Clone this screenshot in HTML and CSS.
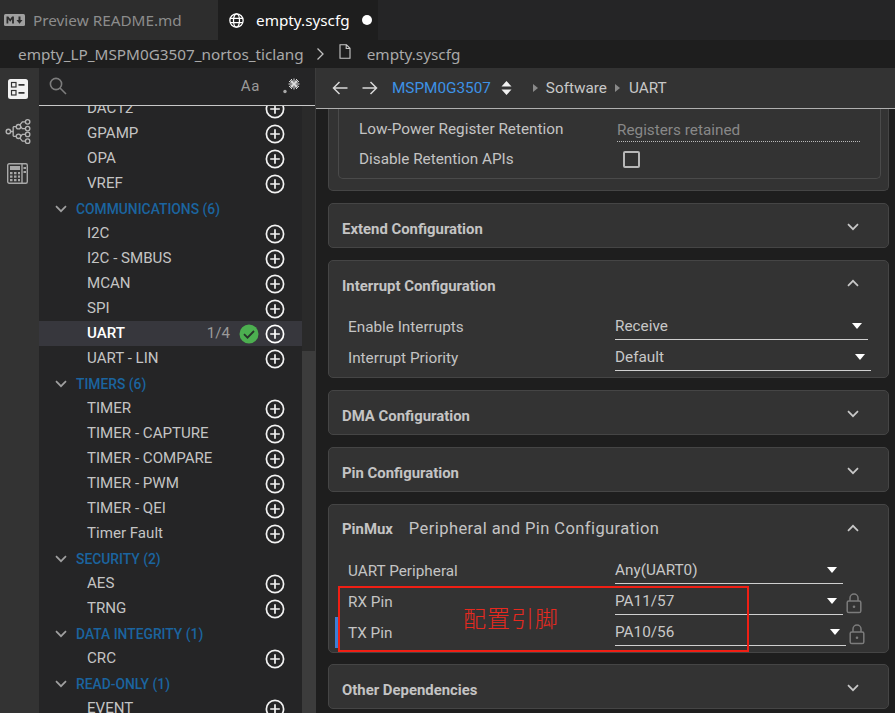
FILE: index.html
```html
<!DOCTYPE html>
<html lang="en">
<head>
<meta charset="utf-8">
<title>empty.syscfg</title>
<link rel="stylesheet" href="styles.css">
</head>
<body>
<svg class="defs" width="0" height="0">
  <symbol id="plus" viewBox="0 0 20 20"><circle cx="10" cy="10" r="8.6" fill="none" stroke="currentColor" stroke-width="1.7"/><path d="M10 5.2v9.6M5.2 10h9.6" stroke="currentColor" stroke-width="1.7" fill="none"/></symbol>
  <symbol id="chev" viewBox="0 0 12 8"><path d="M1 1.2l5 5 5-5" fill="none" stroke="currentColor" stroke-width="1.7"/></symbol>
  <symbol id="up" viewBox="0 0 12 8"><path d="M1 6.8l5-5 5 5" fill="none" stroke="currentColor" stroke-width="1.7"/></symbol>
  <symbol id="lock" viewBox="0 0 16 22"><path d="M4 9V6a4 4 0 0 1 8 0v3" fill="none" stroke="currentColor" stroke-width="1.5"/><rect x="1.2" y="9" width="13.6" height="11.6" rx="1.6" fill="none" stroke="currentColor" stroke-width="1.5"/><circle cx="8" cy="14.8" r="1.3" fill="currentColor"/></symbol>
</svg>
<header class="tabs">
  <div class="tab">
    <svg class="md-icon" width="21" height="12" viewBox="0 0 21 12"><rect width="21" height="12" rx="1.5" fill="#a0a0a0"/><path d="M2.5 9.5V2.5h1.8l1.9 2.6 1.9-2.6h1.8v7H8.100V5.200L6.200 7.700 4.300 5.200v4.300zM14.500 2.500h2v3.500h2L15.500 9.700 12.500 6h2z" fill="#2d2d2d"/></svg>
    <span>Preview README.md</span>
  </div>
  <div class="tab tab-active">
    <svg class="globe" width="15" height="15" viewBox="0 0 14 14" fill="none" stroke="#fff" stroke-width="1.2"><circle cx="7" cy="7" r="6.200"/><ellipse cx="7" cy="7" rx="2.800" ry="6.200"/><path d="M1 5h12M1 9h12"/></svg>
    <span class="tab-name">empty.syscfg</span>
    <span class="dot"></span>
  </div>
</header>
<nav class="crumbs">
  <span>empty_LP_MSPM0G3507_nortos_ticlang</span>
  <svg class="crumb-sep" width="9" height="14" viewBox="0 0 9 14"><path d="M1.500 1.500L7 7l-5.500 5.500" fill="none" stroke="#c0c0c0" stroke-width="1.300"/></svg>
  <svg class="crumb-file" width="12" height="15" viewBox="0 0 12 15"><path d="M1 .8h6.500L11 4.300v9.900H1zM7.200 1v3.500H11" fill="none" stroke="#c8c8c8" stroke-width="1.100"/></svg>
  <span>empty.syscfg</span>
</nav>
<div class="workspace">
  <aside class="activity">
    <div class="act act-on">
      <svg width="20" height="20" viewBox="0 0 20 20"><rect width="20" height="20" rx="2.500" fill="#f2f2f2"/><g fill="none" stroke="#333" stroke-width="1.200"><rect x="3.500" y="3.500" width="4.500" height="4.500"/><rect x="3.500" y="11.500" width="4.500" height="4.500"/></g><path d="M10.500 5h6v1.800h-6zM10.500 13h6v1.800h-6z" fill="#333"/></svg>
    </div>
    <div class="act">
      <svg width="26" height="27" viewBox="0 0 27 27" fill="none" stroke="#b4b4b4" stroke-width="1.400"><circle cx="3.500" cy="13.500" r="2.300"/><circle cx="14" cy="8.500" r="2.300"/><circle cx="14" cy="18.500" r="2.300"/><circle cx="23.500" cy="3.500" r="2.300"/><circle cx="23.500" cy="10.500" r="2.300"/><circle cx="23.500" cy="16.500" r="2.300"/><circle cx="23.500" cy="23.500" r="2.300"/><path d="M5.800 13.500h2.700M8.500 8.500v10M8.500 8.500h3.200M8.500 18.500h3.200M15.500 6.700l2.500-3.200h3.200M16.300 8.500l1.700 2h3.200M16.300 18.500l1.700-2h3.200M15.500 20.300l2.500 3.200h3.200"/></svg>
    </div>
    <div class="act">
      <svg width="21" height="21" viewBox="0 0 21 21"><rect x=".7" y=".7" width="19.600" height="19.600" rx="1.500" fill="none" stroke="#a8a8a8" stroke-width="1.400"/><path d="M15 .7v19.600" stroke="#a8a8a8" stroke-width="1.400"/><path d="M3 3h10v4H3zM3 9h2.500v2.200H3zM7 9h2.500v2.200H7zM11 9h2v2.200h-2zM3 12.500h2.500v2.200H3zM7 12.500h2.500v2.200H7zM11 12.500h2v2.200h-2zM3 16h2.500v2.200H3zM7 16h2.500v2.200H7zM11 16h2v2.200h-2zM16.500 4h2.500v2h-2.500zM16.500 8h2.500v2h-2.500z" fill="#a8a8a8"/></svg>
    </div>
  </aside>
  <aside class="sidebar">
    <div class="search">
      <svg class="search-icon" width="18" height="18" viewBox="0 0 18 18" fill="none" stroke="#7d7d7d" stroke-width="1.600"><circle cx="7" cy="7" r="5.600"/><path d="M11 11l6 6"/></svg>
      <span class="aa">Aa</span>
      <svg class="regex" width="18" height="18" viewBox="0 0 18 18"><circle cx="2" cy="14.500" r="1.700" fill="#a8a8a8"/><path d="M11 1.500v11M5.500 7h11M7.100 3.100l7.800 7.800M14.900 3.100l-7.800 7.800M8.200 2l5.600 10M13.800 2L8.200 12M6 4.300l10 5.400M16 4.300L6 9.700" stroke="#e0e0e0" stroke-width="1" fill="none"/></svg>
    </div>
    <div class="tree-wrap">
      <div class="tree">
        <div class="row">DAC12<svg class="add"><use href="#plus"/></svg></div>
        <div class="row">GPAMP<svg class="add"><use href="#plus"/></svg></div>
        <div class="row">OPA<svg class="add"><use href="#plus"/></svg></div>
        <div class="row">VREF<svg class="add"><use href="#plus"/></svg></div>
        <div class="group"><svg class="g-chev"><use href="#chev"/></svg>COMMUNICATIONS (6)</div>
        <div class="row">I2C<svg class="add"><use href="#plus"/></svg></div>
        <div class="row">I2C - SMBUS<svg class="add"><use href="#plus"/></svg></div>
        <div class="row">MCAN<svg class="add"><use href="#plus"/></svg></div>
        <div class="row">SPI<svg class="add"><use href="#plus"/></svg></div>
        <div class="row row-on"><span class="row-name">UART</span><span class="count">1/4</span>
          <svg class="ok" width="20" height="20" viewBox="0 0 20 20"><circle cx="10" cy="10" r="9.500" fill="#4caf50"/><path d="M5 10.200l3.500 3.500L15 7" fill="none" stroke="#26332a" stroke-width="1.800"/></svg>
          <svg class="add add-tight"><use href="#plus"/></svg></div>
        <div class="row">UART - LIN<svg class="add"><use href="#plus"/></svg></div>
        <div class="group"><svg class="g-chev"><use href="#chev"/></svg>TIMERS (6)</div>
        <div class="row">TIMER<svg class="add"><use href="#plus"/></svg></div>
        <div class="row">TIMER - CAPTURE<svg class="add"><use href="#plus"/></svg></div>
        <div class="row">TIMER - COMPARE<svg class="add"><use href="#plus"/></svg></div>
        <div class="row">TIMER - PWM<svg class="add"><use href="#plus"/></svg></div>
        <div class="row">TIMER - QEI<svg class="add"><use href="#plus"/></svg></div>
        <div class="row">Timer Fault<svg class="add"><use href="#plus"/></svg></div>
        <div class="group"><svg class="g-chev"><use href="#chev"/></svg>SECURITY (2)</div>
        <div class="row">AES<svg class="add"><use href="#plus"/></svg></div>
        <div class="row">TRNG<svg class="add"><use href="#plus"/></svg></div>
        <div class="group"><svg class="g-chev"><use href="#chev"/></svg>DATA INTEGRITY (1)</div>
        <div class="row">CRC<svg class="add"><use href="#plus"/></svg></div>
        <div class="group"><svg class="g-chev"><use href="#chev"/></svg>READ-ONLY (1)</div>
        <div class="row">EVENT<svg class="add"><use href="#plus"/></svg></div>
      </div>
      <div class="scroll"><div class="thumb"></div></div>
    </div>
  </aside>
  <main class="main">
    <div class="toolbar">
      <svg width="16" height="14" viewBox="0 0 16 14" fill="none" stroke="#d8d8d8" stroke-width="1.500"><path d="M15.500 7H1.500M7.500 1L1.500 7l6 6"/></svg>
      <svg class="fwd" width="16" height="14" viewBox="0 0 16 14" fill="none" stroke="#d8d8d8" stroke-width="1.500"><path d="M.5 7h14M8.500 1l6 6-6 6"/></svg>
      <span class="device">MSPM0G3507</span>
      <svg class="updown" width="11" height="14" viewBox="0 0 11 14" fill="#f0f0f0"><path d="M5.500 0l5 5.500H.5zM5.500 14l-5-5.500h10z"/></svg>
      <span class="tri first"></span><span class="path">Software</span><span class="tri"></span><span class="path">UART</span>
    </div>
    <div class="content">
      <section class="card card-top">
        <div class="inner">
          <div class="inner-row"><span class="inner-label">Low-Power Register Retention</span><span class="readonly">Registers retained</span></div>
          <div class="inner-row"><span class="inner-label">Disable Retention APIs</span><span class="check"></span></div>
        </div>
      </section>
      <section class="card closed c45"><h2>Extend Configuration</h2><svg class="toggle"><use href="#chev"/></svg></section>
      <section class="card open card-int">
        <div class="card-head"><h2>Interrupt Configuration</h2><svg class="toggle"><use href="#up"/></svg></div>
        <div class="field"><span class="f-label">Enable Interrupts</span><div class="select w253">Receive<i class="caret"></i></div></div>
        <div class="field"><span class="f-label">Interrupt Priority</span><div class="select w256">Default<i class="caret"></i></div></div>
      </section>
      <section class="card closed c45"><h2>DMA Configuration</h2><svg class="toggle"><use href="#chev"/></svg></section>
      <section class="card closed c45"><h2>Pin Configuration</h2><svg class="toggle"><use href="#chev"/></svg></section>
      <section class="card open card-pin">
        <div class="card-head"><h2>PinMux</h2><span class="sub">Peripheral and Pin Configuration</span><svg class="toggle"><use href="#up"/></svg></div>
        <div class="field"><span class="f-label">UART Peripheral</span><div class="select w228">Any(UART0)<i class="caret"></i></div></div>
        <div class="field"><span class="f-label">RX Pin</span><div class="select w228">PA11/57<i class="caret"></i></div><svg class="lock"><use href="#lock"/></svg></div>
        <div class="field"><span class="f-label">TX Pin</span><div class="select w231">PA10/56<i class="caret"></i></div><svg class="lock"><use href="#lock"/></svg></div>
        <i class="marker"></i>
        <div class="note"><span class="note-text">配置引脚</span></div>
      </section>
      <section class="card closed c45 card-last"><h2>Other Dependencies</h2><svg class="toggle"><use href="#chev"/></svg></section>
    </div>
  </main>
</div>
</body>
</html>
```
FILE: styles.css
```css
* { box-sizing: border-box; }
html, body { margin: 0; height: 713px; overflow: hidden; }
body { background: #1e1e1e; color: #ccc; font-family: Roboto, "Liberation Sans", sans-serif; font-size: 15.3px; display: flex; flex-direction: column; }
.defs { position: absolute; }

.tabs { height: 40px; flex: none; display: flex; background: #252526; }
.tab { width: 218px; display: flex; align-items: center; padding-left: 4px; gap: 8px; background: #2d2d2d; color: #8c8c8c; font-family: "Noto Sans", sans-serif; font-size: 15.3px; }
.md-icon { flex: none; }
.tab-active { width: 160px; padding-left: 11px; gap: 12px; background: #1e1e1e; color: #fff; }
.globe { flex: none; }
.tab-name { width: 94px; flex: none; }
.dot { width: 10px; height: 10px; border-radius: 50%; background: #fff; flex: none; }

.crumbs { height: 28px; flex: none; display: flex; align-items: center; padding-left: 18px; background: #1e1e1e; color: #a9a9a9; font-family: "Noto Sans", sans-serif; font-size: 15.3px; }
.crumb-sep { margin: 0 14px 0 12px; }
.crumb-file { margin-right: 16px; margin-top: -5px; }

.workspace { flex: 1; min-height: 0; display: flex; }
.activity { width: 39px; flex: none; background: #333; display: flex; flex-direction: column; align-items: center; padding: 11px 4px 0 0; }
.act { height: 42px; display: flex; align-items: center; justify-content: center; }
.act-on { height: 20px; margin-bottom: 11px; }

.sidebar { width: 277px; flex: none; background: #252526; display: flex; flex-direction: column; border-right: 1px solid #3c3c3c; }
.search { height: 38px; flex: none; display: flex; align-items: center; border-bottom: 1px solid #c8c8c8; padding: 0 14px 0 10px; }
.search-icon { margin-top: -2px; }
.aa { margin-left: auto; margin-right: 23px; color: #9a9a9a; font-size: 15px; letter-spacing: .6px; margin-top: -1px; }
.regex { flex: none; margin-top: -2px; }

.tree-wrap { flex: 1; min-height: 0; display: flex; overflow: hidden; }
.tree { flex: 1; min-width: 0; overflow: hidden; }
.tree > :first-child { margin-top: -10px; }
.row { height: 25px; display: flex; align-items: center; padding: 0 17px 2px 48px; justify-content: space-between; color: #c4c4c4; font-size: 15.1px; }
.row-on { background: #37373d; color: #fff; font-weight: 500; justify-content: flex-start; }
.row-name { flex: 1; }
.count { color: #9a9a9a; font-weight: 400; margin-right: 9px; }
.ok { margin: 0 6px -2px 0; }
.add { width: 20px; height: 20px; flex: none; color: #f2f2f2; margin-bottom: -2px; }
.add-tight { color: #fff; }
.group { height: 25px; display: flex; align-items: center; padding-left: 16px; color: #1b649f; font-size: 13.85px; font-weight: 500; }
.g-chev { width: 12px; height: 8px; color: #a0a0a0; margin-right: 9px; }
.scroll { width: 13px; flex: none; background: #2a2a2a; padding-top: 245px; }
.thumb { height: 100%; background: #3c3c3c; }

.main { flex: 1; min-width: 0; display: flex; flex-direction: column; }
.toolbar { height: 41px; flex: none; display: flex; align-items: center; background: #333; border-bottom: 1px solid #b0b0b0; padding-left: 16px; }
.fwd { margin-left: 14px; }
.device { margin-left: 14px; color: #3d92e6; }
.updown { margin-left: 10px; }
.tri { width: 0; height: 0; border-left: 5px solid #8a8a8a; border-top: 4.5px solid transparent; border-bottom: 4.5px solid transparent; margin: 0 9px 0 8px; }
.tri.first { margin: 0 8px 0 21px; }
.path { color: #c8c8c8; }

.content { flex: 1; min-height: 0; overflow: hidden; padding: 0 6px 0 12px; display: flex; flex-direction: column; gap: 12px; background: #1e1e1e; }
.card { flex: none; background: #333; border: 1px solid #454545; border-radius: 5px; position: relative; }
.card-top { height: 82px; border-top: 0; border-radius: 0 0 5px 5px; padding: 0 7px 11px 9px; }
.inner { height: 70px; border: 1px solid #4a4a4a; border-top: 0; border-radius: 0 0 5px 5px; padding: 5px 0 0 20px; }
.inner-row { height: 30px; display: flex; align-items: center; }
.inner-label { width: 258px; flex: none; color: #c4c4c4; }
.readonly { width: 243px; height: 24px; line-height: 25px; color: #888; border-bottom: 1px dotted #bbb; margin-top: 2px; }
.check { width: 17px; height: 17px; margin-left: 6px; border: 2px solid #b8b8b8; border-radius: 2px; }

h2 { margin: 0; font-size: 14.9px; font-weight: 700; color: #c4c4c4; }
.closed { display: flex; align-items: center; justify-content: space-between; padding: 6px 29px 0 13px; }
.c45 { height: 45px; }
.card-last { margin-top: -1px; }
.toggle { width: 12px; height: 8px; color: #c8c8c8; flex: none; margin-top: -4px; }
.open { padding: 0 0 0 14px; }
.card-head { height: 51px; display: flex; align-items: center; padding: 0 29px 2px 0; margin-left: -1px; }
.card-head .toggle { margin-left: auto; margin-top: -6px; }
.card-pin .card-head { padding-bottom: 4px; }
.card-pin .card-head .toggle { margin-top: -2px; }
.sub { margin-left: 16px; font-size: 16.5px; letter-spacing: .43px; color: #c4c4c4; }
.card-int { height: 118px; }
.card-pin { height: 149px; }
.field { height: 31px; display: flex; align-items: center; padding-left: 5px; }
.f-label { width: 267px; flex: none; color: #c4c4c4; padding-bottom: 2px; }
.select { height: 24px; display: flex; align-items: center; justify-content: space-between; padding: 0 6px 2px 0; border-bottom: 1px solid #d0d0d0; color: #c8c8c8; }
.w253 { width: 253px; }
.w256 { width: 256px; }
.w228 { width: 228px; }
.w231 { width: 231px; }
.caret { width: 0; height: 0; border-left: 5.5px solid transparent; border-right: 5.5px solid transparent; border-top: 6px solid #fff; }
.lock { width: 16px; height: 22px; color: #7c7c7c; margin-left: 3px; }
.marker { position: absolute; left: 6px; top: 112px; width: 3px; height: 31px; background: #3d7fd6; }
.note { position: absolute; left: 9px; top: 81px; width: 411px; height: 66px; border: 2px solid #f01f14; display: flex; align-items: center; padding: 0 0 4px 123px; }
.note-text { color: #e8291f; font-family: "Noto Sans CJK SC", sans-serif; font-weight: 300; font-size: 23px; letter-spacing: 1px; }
```
